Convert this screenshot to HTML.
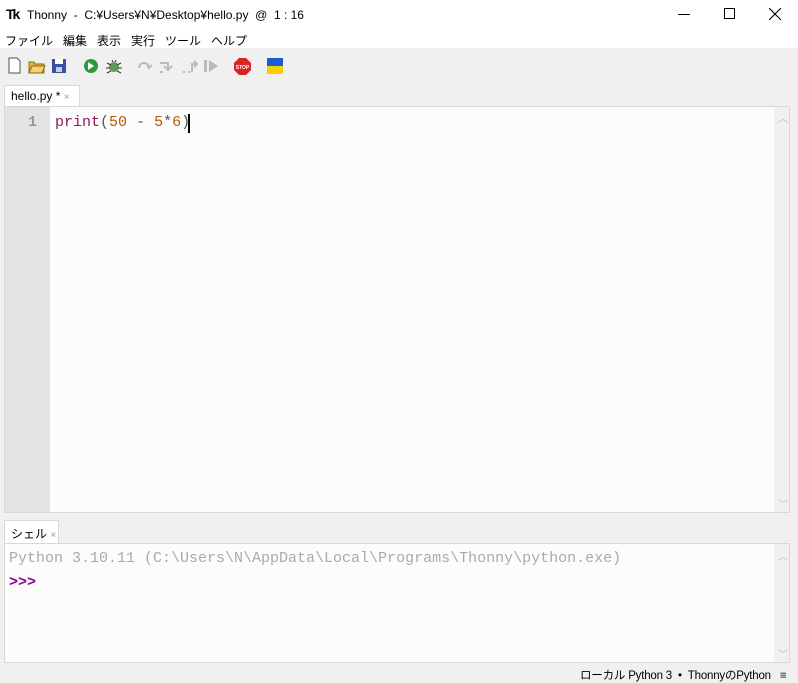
<!DOCTYPE html><html><head><meta charset="utf-8"><style>
*{margin:0;padding:0;box-sizing:border-box}
body{width:798px;height:682px;background:#f0f0f0;position:relative;overflow:hidden;font-family:"Liberation Sans","Noto Sans CJK JP",sans-serif;font-size:12px;color:#000}
.abs{position:absolute;white-space:nowrap}
.mono{font-family:"Liberation Mono","DejaVu Sans Mono",monospace;font-size:15px}
</style></head><body>
<div class="abs" style="left:0;top:0;width:798px;height:48px;background:#fff"></div>
<div class="abs" style="left:6px;top:6px;font-weight:bold;font-size:14px;letter-spacing:-2px">Tk</div>
<div class="abs" style="left:27px;top:8px;font-size:12px">Thonny &nbsp;- &nbsp;C:¥Users¥N¥Desktop¥hello.py &nbsp;@ &nbsp;1 : 16</div>
<div class="abs" style="left:678px;top:14px;width:12px;height:1px;background:#000"></div>
<div class="abs" style="left:724px;top:8px;width:11px;height:11px;border:1px solid #000"></div>
<svg class="abs" style="left:769px;top:8px" width="12" height="12"><path d="M0 0L12 12M12 0L0 12" stroke="#000" stroke-width="1.1"/></svg>
<div class="abs" style="left:5px;top:32px">ファイル&nbsp;&nbsp;&nbsp;編集&nbsp;&nbsp;&nbsp;表示&nbsp;&nbsp;&nbsp;実行&nbsp;&nbsp;&nbsp;ツール&nbsp;&nbsp;&nbsp;ヘルプ</div>
<svg class="abs" style="left:0;top:55px" width="300" height="22">
<path d="M9 3h8l3 3v12H9z" fill="#fff" stroke="#555"/>
<path d="M29 7h5l1 2h9v9H29z" fill="#e8b43a" stroke="#8a6a1c"/><path d="M32 11h13l-3 7H29z" fill="#f7d26a" stroke="#8a6a1c"/>
<rect x="52" y="4" width="14" height="14" fill="#3a4fa8"/><rect x="55" y="4" width="8" height="5" fill="#fff"/><rect x="56" y="12" width="6" height="5" fill="#ccc"/>
<circle cx="91" cy="11" r="7" fill="#2e9a3a"/><path d="M88 7l6 4-6 4z" fill="#fff"/>
<circle cx="114" cy="12" r="5" fill="#5a9a5a"/><path d="M107 8l4 2M121 8l-4 2M106 13h4M122 13h-4M107 18l4-2M121 18l-4-2M112 5l1 2M116 5l-1 2" stroke="#333"/>
<path d="M139 13a5 5 0 0 1 10 0M147 9l2 4 3-3" stroke="#bbb" stroke-width="2" fill="none"/>
<path d="M160 8h8v6M164 11l4 4 4-4M160 17h3" stroke="#bbb" stroke-width="2" fill="none"/>
<path d="M183 17h2M188 17h2M192 17v-8h4M194 6l3 3-3 3" stroke="#bbb" stroke-width="2" fill="none"/>
<rect x="204" y="5" width="3" height="12" fill="#bbb"/><path d="M209 5l9 6-9 6z" fill="#bbb"/>
<polygon points="239,3 246,3 251,8 251,15 246,20 239,20 234,15 234,8" fill="#d22"/>
<text x="242.5" y="14" font-size="5" fill="#fff" text-anchor="middle" font-family="Liberation Sans" font-weight="bold">STOP</text>
<rect x="267" y="3" width="16" height="8" fill="#1e5bd6"/><rect x="267" y="11" width="16" height="8" fill="#f7d000"/>
</svg>
<div class="abs" style="left:4px;top:85px;width:76px;height:22px;background:#fff;border:1px solid #d8d8d8;border-bottom:none"></div>
<div class="abs" style="left:11px;top:89px">hello.py * <span style="color:#999;font-size:10px">×</span></div>
<div class="abs" style="left:4px;top:106px;width:786px;height:407px;background:#fcfcfc;border:1px solid #d8d8d8"></div>
<div class="abs" style="left:5px;top:107px;width:45px;height:405px;background:#e4e4e4"></div>
<div class="abs mono" style="left:28px;top:114px;color:#999;font-weight:bold">1</div>
<div class="abs mono" style="left:55px;top:114px"><span style="color:#8a1a5a">print</span><span style="color:#555">(</span><span style="color:#b35a00">50</span> <span style="color:#555">-</span> <span style="color:#b35a00">5</span><span style="color:#555">*</span><span style="color:#b35a00">6</span><span style="color:#555">)</span></div>
<div class="abs" style="left:188px;top:114px;width:2px;height:19px;background:#000"></div>
<div class="abs" style="left:774px;top:107px;width:15px;height:405px;background:#f0f0f0"></div>
<div class="abs" style="left:778px;top:110px;color:#bbb;font-size:10px">︿</div>
<div class="abs" style="left:778px;top:496px;color:#bbb;font-size:10px">﹀</div>
<div class="abs" style="left:4px;top:520px;width:55px;height:24px;background:#fff;border:1px solid #d8d8d8;border-bottom:none"></div>
<div class="abs" style="left:11px;top:525px">シェル <span style="color:#999;font-size:10px">×</span></div>
<div class="abs" style="left:4px;top:543px;width:786px;height:120px;background:#fcfcfc;border:1px solid #d8d8d8"></div>
<div class="abs mono" style="left:9px;top:550px;color:#aaa">Python 3.10.11 (C:\Users\N\AppData\Local\Programs\Thonny\python.exe)</div>
<div class="abs mono" style="left:9px;top:574px;color:#8b008b;font-weight:bold">&gt;&gt;&gt;</div>
<div class="abs" style="left:774px;top:544px;width:15px;height:118px;background:#f0f0f0"></div>
<div class="abs" style="left:778px;top:548px;color:#bbb;font-size:10px">︿</div>
<div class="abs" style="left:778px;top:646px;color:#bbb;font-size:10px">﹀</div>
<div class="abs" style="left:580px;top:667px;font-size:11.5px;letter-spacing:-0.2px">ローカル Python 3 &nbsp;• &nbsp;ThonnyのPython &nbsp;&nbsp;≡</div>
</body></html>
